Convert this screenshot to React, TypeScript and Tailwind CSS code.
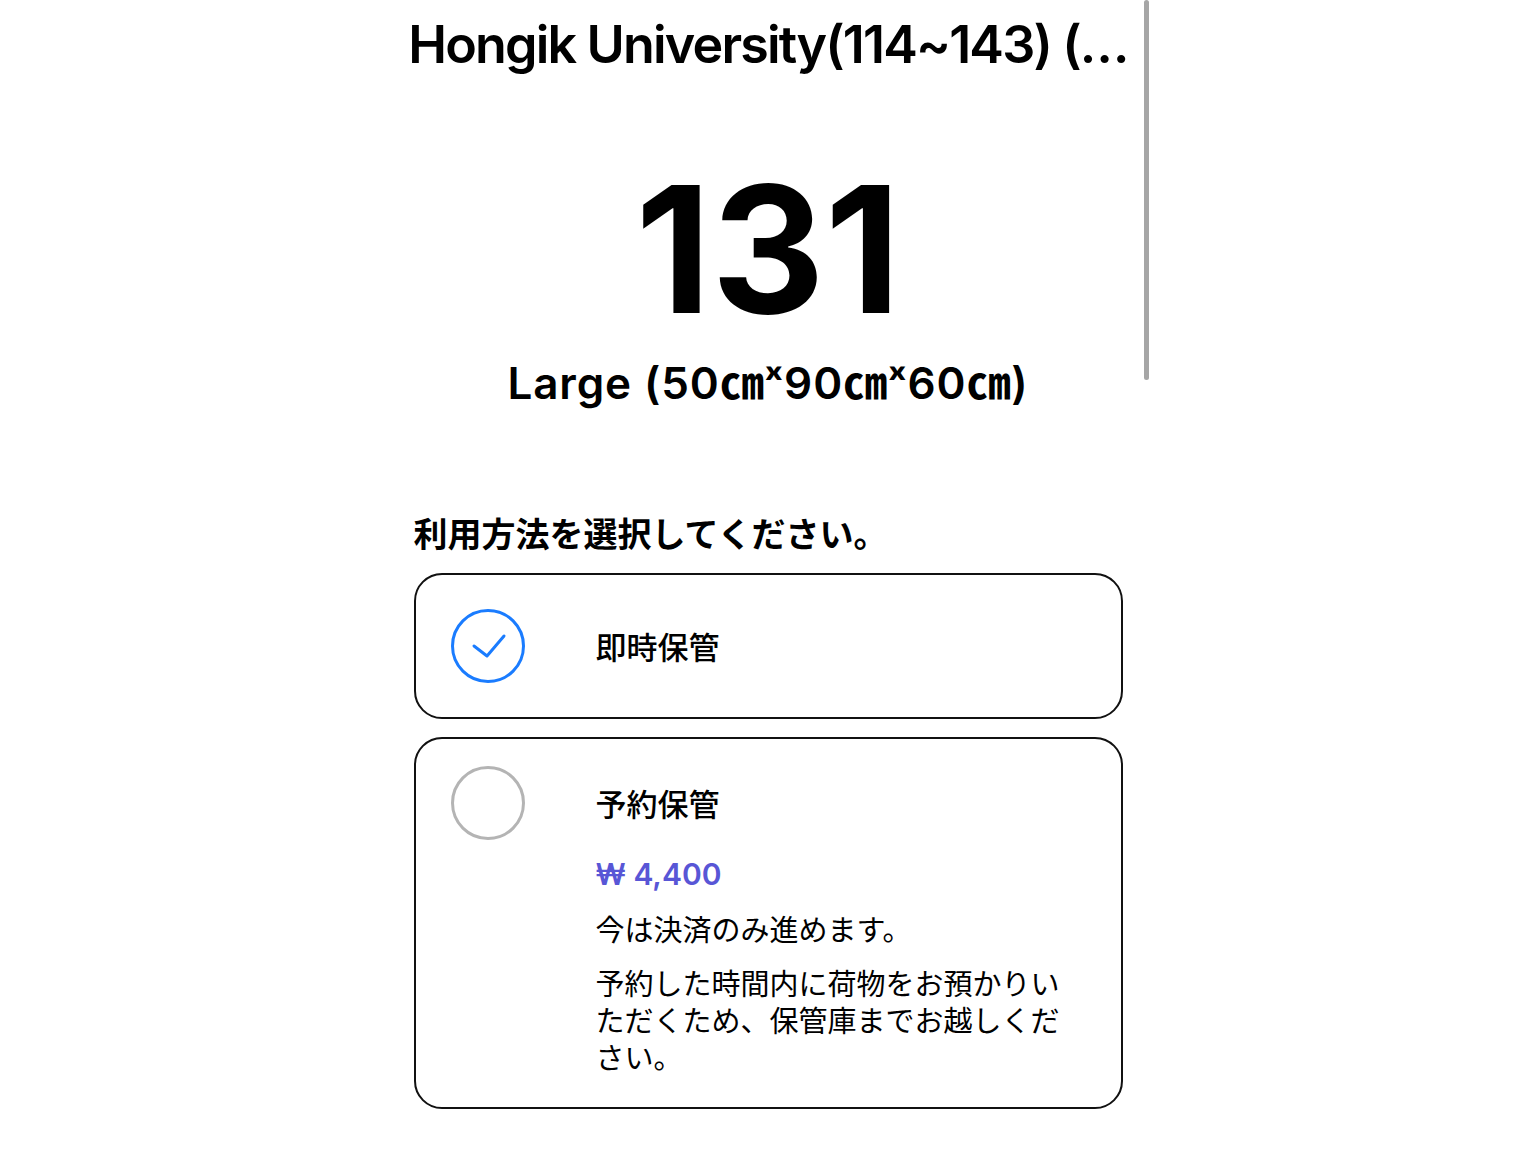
import React, { useState } from 'react';

const jp = "font-['Noto_Sans_CJK_JP','Noto_Sans',sans-serif]";

const CheckCircle: React.FC<{ checked: boolean }> = ({ checked }) => (
  <svg width="74" height="74" viewBox="0 0 74 74" className="shrink-0">
    <circle cx="37" cy="37" r="35.5" fill="none" stroke={checked ? '#1a7cff' : '#b4b4b4'} strokeWidth="3" />
    {checked && (
      <path d="M23 37 L36 47 L53 27" fill="none" stroke="#1a7cff" strokeWidth="3" strokeLinecap="round" strokeLinejoin="round" />
    )}
  </svg>
);

export default function App() {
  const [mode, setMode] = useState<'now' | 'reserve'>('now');

  return (
    <div className="min-h-screen bg-white text-black font-['Inter','Noto_Sans_CJK_JP',sans-serif]">
      <div className="relative mx-auto w-[709px]">
        {/* overlay scroll indicator */}
        <div className="absolute left-[730px] top-0 h-[380px] w-[5px] rounded-full bg-[#a6a6a6]" />

        <h1 className="-mx-[6px] pt-[13px] text-center text-[52px] font-semibold leading-[64px] tracking-[-0.035em] whitespace-nowrap">
          Hongik University(114~143) (…
        </h1>

        <div className="mt-[84px] text-center text-[176px] font-bold leading-[176px]">131</div>

        <div className="mt-[24px] text-center text-[44px] font-semibold leading-[44px] tracking-[0.02em]">
          Large (50㎝ˣ90㎝ˣ60㎝)
        </div>

        <h2 className={`${jp} mt-[108px] text-[34px] font-bold leading-[40px]`}>利用方法を選択してください。</h2>

        <div className="mt-[20px] flex flex-col gap-[18px]">
          <button
            onClick={() => setMode('now')}
            className="flex items-center rounded-[28px] border-2 border-[#111] bg-white py-[34px] pl-[35px] pr-[45px] text-left"
          >
            <CheckCircle checked={mode === 'now'} />
            <span className={`${jp} ml-[71px] text-[31px] font-medium leading-[40px]`}>即時保管</span>
          </button>

          <button
            onClick={() => setMode('reserve')}
            className="flex items-start rounded-[28px] border-2 border-[#111] bg-white pt-[27px] pb-[32px] pl-[35px] pr-[45px] text-left"
          >
            <CheckCircle checked={mode === 'reserve'} />
            <div className="ml-[71px] flex flex-1 flex-col">
              <span className={`${jp} text-[31px] font-medium leading-[74px]`}>予約保管</span>
              <span className="mt-[14px] text-[30px] font-semibold leading-[40px] text-[#5856d6]">₩ 4,400</span>
              <span className={`${jp} mt-[14px] text-[29px] leading-[40px]`}>今は決済のみ進めます。</span>
              <p className={`${jp} mt-[16px] text-[29px] leading-[37px]`}>
                予約した時間内に荷物をお預かりいただくため、保管庫までお越しください。
              </p>
            </div>
          </button>
        </div>
        <div className="h-[49px]" />
      </div>
    </div>
  );
}
